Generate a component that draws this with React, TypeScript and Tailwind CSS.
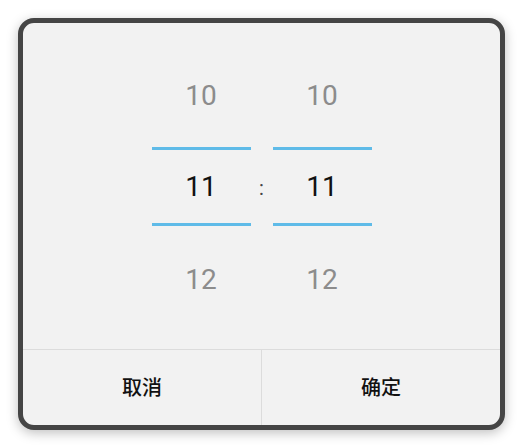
const hours = ["10", "11", "12"];
const minutes = ["10", "11", "12"];

function Column({ values }: { values: string[] }) {
  return (
    <div className="flex w-[99px] flex-col">
      <div className="flex h-10 items-center justify-center text-[28px] text-[#8c8c8c]">{values[0]}</div>
      <div className="mt-[31px] h-[3px] bg-[#5fbbe8]" />
      <div className="flex h-[73px] items-center justify-center pt-px text-[28px] text-[#111]">{values[1]}</div>
      <div className="h-[3px] bg-[#5fbbe8]" />
      <div className="mt-[34px] flex h-10 items-center justify-center text-[28px] text-[#8c8c8c]">{values[2]}</div>
    </div>
  );
}

export default function App() {
  return (
    <div className="h-[448px] w-[525px] bg-white pl-[18px] pt-[18px]">
      <div
        className="flex h-[412px] w-[487px] flex-col overflow-hidden rounded-[16px] border-[5px] border-[#454545] bg-[#f2f2f2] shadow-[0_3px_12px_rgba(0,0,0,0.25)]"
        style={{ fontFamily: "Roboto, 'Noto Sans CJK SC', sans-serif" }}
      >
        <div className="flex flex-1 justify-center pt-[53px]">
          <Column values={hours} />
          <div className="flex w-[22px] flex-col">
            <div className="mt-[74px] flex h-[73px] items-center justify-center pt-[2px] text-[20px] text-[#444]">:</div>
          </div>
          <Column values={minutes} />
        </div>
        <div className="flex h-[76px] border-t border-[#dcdcdc]">
          <button className="flex flex-1 items-center justify-center text-[20px] font-medium text-[#111]">取消</button>
          <div className="w-px bg-[#dcdcdc]" />
          <button className="flex flex-1 items-center justify-center text-[20px] font-medium text-[#111]">确定</button>
        </div>
      </div>
    </div>
  );
}
